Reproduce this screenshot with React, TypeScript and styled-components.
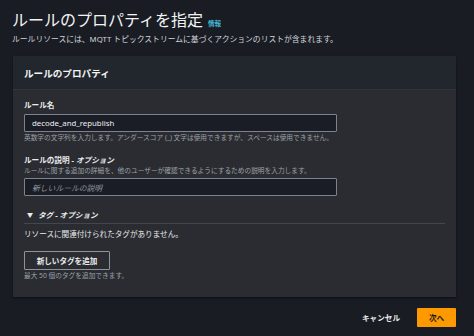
import React from "react";
import styled, { createGlobalStyle } from "styled-components";

const GlobalStyle = createGlobalStyle`
  body {
    margin: 0;
    background: #191c23;
    font-family: "Noto Sans", "Noto Sans CJK JP", sans-serif;
    color: #e9ebed;
  }
`;

const Page = styled.div`
  width: 474px;
  height: 336px;
  padding: 0 18px 0 12px;
  box-sizing: border-box;
  overflow: hidden;
`;

const TitleRow = styled.div`
  display: flex;
  align-items: baseline;
  gap: 5px;
  padding-top: 9px;
`;

const Title = styled.h1`
  margin: 0;
  font-size: 16px;
  line-height: 22px;
  font-weight: 400;
  color: #f2f3f3;
`;

const InfoLink = styled.span`
  font-size: 6.5px;
  font-weight: 700;
  color: #44b9d6;
`;

const Subtitle = styled.p`
  margin: 2px 0 0;
  font-size: 7.8px;
  line-height: 12px;
  color: #d1d5db;
`;

const Card = styled.section`
  margin: 11px 0 0 1px;
  background: #2a2c31;
  box-shadow: 0 1px 2px rgba(0, 0, 0, 0.5);
`;

const CardHeader = styled.div`
  height: 34px;
  display: flex;
  align-items: center;
  padding: 0 11px;
  background: #22262d;
  border-bottom: 1px solid #30343b;
  box-sizing: border-box;
`;

const CardTitle = styled.h2`
  margin: 0;
  font-size: 9.6px;
  font-weight: 700;
  color: #f2f3f3;
`;

const CardBody = styled.div`
  padding: 9px 11px 17px;
`;

const Field = styled.div<{ $gap?: number }>`
  margin-top: ${(p) => p.$gap ?? 0}px;
`;

const Label = styled.div`
  font-size: 7.6px;
  line-height: 12px;
  font-weight: 700;
  color: #e9ebed;
`;

const Optional = styled.span`
  font-style: italic;
`;

const Desc = styled.div`
  font-size: 6.7px;
  line-height: 10px;
  color: #9ba1a8;
`;

const Input = styled.div<{ $placeholder?: boolean }>`
  width: 313px;
  height: 18px;
  margin-top: ${(p) => (p.$placeholder ? 2 : 3)}px;
  padding: 0 7px;
  box-sizing: border-box;
  display: flex;
  align-items: center;
  background: #1a1d25;
  border: 1px solid #7d838c;
  border-radius: 1px;
  font-size: 7.8px;
  color: ${(p) => (p.$placeholder ? "#8d939b" : "#eef0f2")};
  font-style: ${(p) => (p.$placeholder ? "italic" : "normal")};
`;

const Hint = styled.div`
  margin-top: 1px;
  font-size: 6.7px;
  line-height: 9px;
  color: #9ba1a8;
`;

const Expander = styled.div`
  margin-top: 13px;
  padding: 0 0 2px 3px;
  border-bottom: 1px solid #414750;
  display: flex;
  align-items: center;
  gap: 5px;
  font-size: 7.6px;
  line-height: 12px;
  font-weight: 700;
  font-style: italic;
  color: #e9ebed;
`;

const Caret = styled.span`
  font-style: normal;
  font-size: 6px;
`;

const Empty = styled.div`
  margin-top: 4px;
  font-size: 7.6px;
  line-height: 12px;
  color: #e9ebed;
`;

const OutlineButton = styled.button`
  margin-top: 11px;
  display: block;
  height: 19px;
  width: 86px;
  background: transparent;
  border: 1px solid #8d939b;
  border-radius: 1px;
  font-family: inherit;
  font-size: 7.6px;
  font-weight: 700;
  color: #e9ebed;
  padding: 0;
`;

const Footer = styled.div`
  display: flex;
  justify-content: flex-end;
  align-items: center;
  gap: 17px;
  margin-top: 11px;
`;

const TextButton = styled.span`
  font-size: 7.6px;
  font-weight: 700;
  color: #e9ebed;
`;

const PrimaryButton = styled.button`
  width: 39px;
  height: 19px;
  background: #ff9900;
  border: none;
  border-radius: 1px;
  font-family: inherit;
  font-size: 7.6px;
  font-weight: 700;
  color: #16191f;
  padding: 0;
`;

export default function App() {
  return (
    <Page>
      <GlobalStyle />
      <TitleRow>
        <Title>ルールのプロパティを指定</Title>
        <InfoLink>情報</InfoLink>
      </TitleRow>
      <Subtitle>
        ルールリソースには、MQTT トピックストリームに基づくアクションのリストが含まれます。
      </Subtitle>
      <Card>
        <CardHeader>
          <CardTitle>ルールのプロパティ</CardTitle>
        </CardHeader>
        <CardBody>
          <Field>
            <Label>ルール名</Label>
            <Input>decode_and_republish</Input>
            <Hint>
              英数字の文字列を入力します。アンダースコア (_) 文字は使用できますが、スペースは使用できません。
            </Hint>
          </Field>
          <Field $gap={12}>
            <Label>
              ルールの説明 <Optional>- オプション</Optional>
            </Label>
            <Desc>
              ルールに関する追加の詳細を、他のユーザーが確認できるようにするための説明を入力します。
            </Desc>
            <Input $placeholder>新しいルールの説明</Input>
          </Field>
          <Expander>
            <Caret>▼</Caret>
            タグ - オプション
          </Expander>
          <Empty>リソースに関連付けられたタグがありません。</Empty>
          <OutlineButton>新しいタグを追加</OutlineButton>
          <Hint>最大 50 個のタグを追加できます。</Hint>
        </CardBody>
      </Card>
      <Footer>
        <TextButton>キャンセル</TextButton>
        <PrimaryButton>次へ</PrimaryButton>
      </Footer>
    </Page>
  );
}
